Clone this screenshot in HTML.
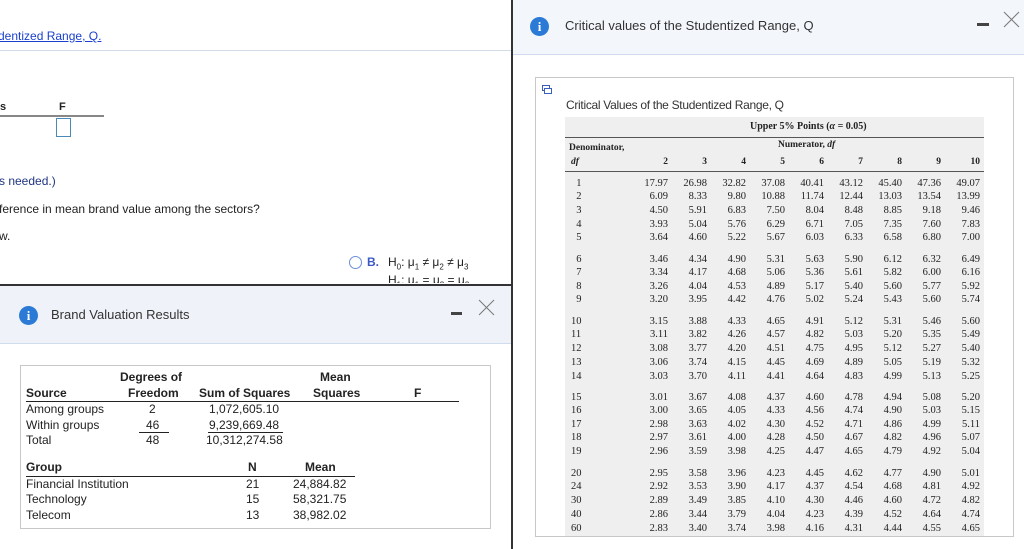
<!DOCTYPE html>
<html><head><meta charset="utf-8"><style>
*{margin:0;padding:0;box-sizing:border-box}
html,body{width:1024px;height:549px;overflow:hidden}
body{background:#fff;position:relative;font-family:"Liberation Sans",sans-serif;color:#222}
.a{position:absolute;white-space:nowrap}
.s{font-size:12px}
.r{position:absolute;left:0;width:430px;white-space:nowrap;font-family:"Liberation Serif",serif;font-size:10.5px;color:#222;height:13px;line-height:13px}
.r span{display:inline-block;width:39px;text-align:right}
.r span.d{width:64px;text-align:left;padding-left:6px}
.b{font-weight:bold}
</style></head><body>
<div class="a s" style="left:-2px;top:29px;color:#1a3fcf;text-decoration:underline">dentized Range, Q.</div>
<div class="a" style="left:0;top:50px;width:512px;height:1px;background:#d3dde9"></div>
<div class="a s b" style="left:0;top:101px;font-size:11px">s</div>
<div class="a s b" style="left:59px;top:101px;font-size:11px">F</div>
<div class="a" style="left:0;top:115px;width:104px;height:2px;background:#888"></div>
<div class="a" style="left:56px;top:118px;width:15px;height:19px;border:1px solid #4a8ab8"></div>
<div class="a s" style="left:-1px;top:174px;color:#1f3582">s needed.)</div>
<div class="a s" style="left:-1px;top:202px">ference in mean brand value among the sectors?</div>
<div class="a s" style="left:-1px;top:229px">w.</div>
<div class="a" style="left:349px;top:256px;width:13px;height:13px;border:1.5px solid #6a8fd8;border-radius:50%"></div>
<div class="a s b" style="left:367px;top:255px;color:#3b58c4">B.</div>
<div class="a s" style="left:388px;top:255px">H<sub style="font-size:8px">0</sub>: μ<sub style="font-size:8px">1</sub> ≠ μ<sub style="font-size:8px">2</sub> ≠ μ<sub style="font-size:8px">3</sub></div>
<div class="a s" style="left:388px;top:273px;height:10px;overflow:hidden">H<sub style="font-size:8px">1</sub>: μ<sub style="font-size:8px">1</sub> = μ<sub style="font-size:8px">2</sub> = μ<sub style="font-size:8px">3</sub></div>
<div class="a" style="left:0;top:284px;width:512px;height:2px;background:#333"></div>
<div class="a" style="left:0;top:286px;width:512px;height:58px;background:#eff3f9"></div>
<div class="a" style="left:0;top:343px;width:512px;height:1px;background:#cfdcee"></div>
<div class="a" style="left:19px;top:306px;width:19px;height:19px;border-radius:50%;background:#2b7bd6;color:#fff;font:bold 13px 'Liberation Serif',serif;text-align:center;line-height:19px">i</div>
<div class="a" style="left:51px;top:307px;font-size:13px;color:#333">Brand Valuation Results</div>
<div class="a" style="left:451px;top:312px;width:11px;height:3px;background:#444"></div>
<svg class="a" style="left:478px;top:299px" width="17" height="17"><path d="M1 1L16 16M16 1L1 16" stroke="#777" stroke-width="1"/></svg>
<div class="a" style="left:20px;top:365px;width:471px;height:164px;border:1px solid #c8c8c8"></div>
<div class="a s b" style="left:120px;top:370px">Degrees of</div>
<div class="a s b" style="left:320px;top:370px">Mean</div>
<div class="a s b" style="left:26px;top:386px">Source</div>
<div class="a s b" style="left:128px;top:386px">Freedom</div>
<div class="a s b" style="left:199px;top:386px">Sum of Squares</div>
<div class="a s b" style="left:313px;top:386px">Squares</div>
<div class="a s b" style="left:414px;top:386px">F</div>
<div class="a" style="left:26px;top:401px;width:433px;height:1px;background:#222"></div>
<div class="a s" style="left:26px;top:402px">Among groups</div>
<div class="a s" style="left:26px;top:418px">Within groups</div>
<div class="a s" style="left:26px;top:433px">Total</div>
<div class="a s" style="left:149px;top:402px">2</div>
<div class="a s" style="left:146px;top:418px">46</div>
<div class="a s" style="left:146px;top:433px">48</div>
<div class="a" style="left:139px;top:432px;width:30px;height:1px;background:#222"></div>
<div class="a s" style="left:209px;top:402px">1,072,605.10</div>
<div class="a s" style="left:209px;top:418px">9,239,669.48</div>
<div class="a s" style="left:206px;top:433px">10,312,274.58</div>
<div class="a" style="left:208px;top:432px;width:75px;height:1px;background:#222"></div>
<div class="a s b" style="left:26px;top:460px">Group</div>
<div class="a s b" style="left:248px;top:460px">N</div>
<div class="a s b" style="left:305px;top:460px">Mean</div>
<div class="a" style="left:26px;top:476px;width:329px;height:1px;background:#222"></div>
<div class="a s" style="left:26px;top:477px">Financial Institution</div>
<div class="a s" style="left:26px;top:492px">Technology</div>
<div class="a s" style="left:26px;top:508px">Telecom</div>
<div class="a s" style="left:246px;top:477px">21</div>
<div class="a s" style="left:246px;top:492px">15</div>
<div class="a s" style="left:246px;top:508px">13</div>
<div class="a s" style="left:293px;top:477px">24,884.82</div>
<div class="a s" style="left:293px;top:492px">58,321.75</div>
<div class="a s" style="left:293px;top:508px">38,982.02</div>
<div class="a" style="left:511px;top:0;width:2px;height:549px;background:#333"></div>
<div class="a" style="left:513px;top:0;width:511px;height:54px;background:#f3f6fb"></div>
<div class="a" style="left:513px;top:54px;width:511px;height:1px;background:#cfdcee"></div>
<div class="a" style="left:530px;top:17px;width:19px;height:19px;border-radius:50%;background:#2b7bd6;color:#fff;font:bold 13px 'Liberation Serif',serif;text-align:center;line-height:19px">i</div>
<div class="a" style="left:565px;top:18px;font-size:13px;color:#333">Critical values of the Studentized Range, Q</div>
<div class="a" style="left:977px;top:23px;width:12px;height:3px;background:#444"></div>
<svg class="a" style="left:1003px;top:11px" width="17" height="17"><path d="M1 1L16 16M16 1L1 16" stroke="#777" stroke-width="1"/></svg>
<div class="a" style="left:535px;top:77px;width:479px;height:460px;border:1px solid #c8c8c8"></div>
<svg class="a" style="left:542px;top:85px" width="10" height="9"><rect x="0.5" y="0.5" width="7" height="5" fill="none" stroke="#3a5ec0"/><rect x="2.5" y="3.5" width="7" height="5" fill="#fff" stroke="#3a5ec0"/></svg>
<div class="a" style="left:566px;top:98px;font-size:12px;color:#333;letter-spacing:-0.3px">Critical Values of the Studentized Range, Q</div>
<div class="a" style="left:565px;top:117px;width:419px;height:419px;background:#efefef"></div>
<div class="a b" style="left:750px;top:121px;font:bold 10px 'Liberation Serif',serif">Upper 5% Points (<i>α</i> = 0.05)</div>
<div class="a" style="left:565px;top:137px;width:419px;height:1px;background:#555"></div>
<div class="a" style="left:569px;top:143px;font:bold 9.5px 'Liberation Serif',serif">Denominator,</div>
<div class="a" style="left:778px;top:140px;font:bold 9.5px 'Liberation Serif',serif">Numerator, <i>df</i></div>
<div class="r b" style="top:156px;left:565px;font-size:9.5px"><span class="d"><i>df</i></span><span>2</span><span>3</span><span>4</span><span>5</span><span>6</span><span>7</span><span>8</span><span>9</span><span>10</span></div>
<div class="a" style="left:565px;top:171px;width:419px;height:1px;background:#555"></div>
<div style="position:absolute;left:565px;top:0;width:430px;height:549px">
<div class="r" style="top:177px"><span class="d">&nbsp;&nbsp;1</span><span>17.97</span><span>26.98</span><span>32.82</span><span>37.08</span><span>40.41</span><span>43.12</span><span>45.40</span><span>47.36</span><span>49.07</span></div>
<div class="r" style="top:190px"><span class="d">&nbsp;&nbsp;2</span><span>6.09</span><span>8.33</span><span>9.80</span><span>10.88</span><span>11.74</span><span>12.44</span><span>13.03</span><span>13.54</span><span>13.99</span></div>
<div class="r" style="top:204px"><span class="d">&nbsp;&nbsp;3</span><span>4.50</span><span>5.91</span><span>6.83</span><span>7.50</span><span>8.04</span><span>8.48</span><span>8.85</span><span>9.18</span><span>9.46</span></div>
<div class="r" style="top:218px"><span class="d">&nbsp;&nbsp;4</span><span>3.93</span><span>5.04</span><span>5.76</span><span>6.29</span><span>6.71</span><span>7.05</span><span>7.35</span><span>7.60</span><span>7.83</span></div>
<div class="r" style="top:231px"><span class="d">&nbsp;&nbsp;5</span><span>3.64</span><span>4.60</span><span>5.22</span><span>5.67</span><span>6.03</span><span>6.33</span><span>6.58</span><span>6.80</span><span>7.00</span></div>
<div class="r" style="top:253px"><span class="d">&nbsp;&nbsp;6</span><span>3.46</span><span>4.34</span><span>4.90</span><span>5.31</span><span>5.63</span><span>5.90</span><span>6.12</span><span>6.32</span><span>6.49</span></div>
<div class="r" style="top:266px"><span class="d">&nbsp;&nbsp;7</span><span>3.34</span><span>4.17</span><span>4.68</span><span>5.06</span><span>5.36</span><span>5.61</span><span>5.82</span><span>6.00</span><span>6.16</span></div>
<div class="r" style="top:280px"><span class="d">&nbsp;&nbsp;8</span><span>3.26</span><span>4.04</span><span>4.53</span><span>4.89</span><span>5.17</span><span>5.40</span><span>5.60</span><span>5.77</span><span>5.92</span></div>
<div class="r" style="top:293px"><span class="d">&nbsp;&nbsp;9</span><span>3.20</span><span>3.95</span><span>4.42</span><span>4.76</span><span>5.02</span><span>5.24</span><span>5.43</span><span>5.60</span><span>5.74</span></div>
<div class="r" style="top:315px"><span class="d">10</span><span>3.15</span><span>3.88</span><span>4.33</span><span>4.65</span><span>4.91</span><span>5.12</span><span>5.31</span><span>5.46</span><span>5.60</span></div>
<div class="r" style="top:328px"><span class="d">11</span><span>3.11</span><span>3.82</span><span>4.26</span><span>4.57</span><span>4.82</span><span>5.03</span><span>5.20</span><span>5.35</span><span>5.49</span></div>
<div class="r" style="top:342px"><span class="d">12</span><span>3.08</span><span>3.77</span><span>4.20</span><span>4.51</span><span>4.75</span><span>4.95</span><span>5.12</span><span>5.27</span><span>5.40</span></div>
<div class="r" style="top:356px"><span class="d">13</span><span>3.06</span><span>3.74</span><span>4.15</span><span>4.45</span><span>4.69</span><span>4.89</span><span>5.05</span><span>5.19</span><span>5.32</span></div>
<div class="r" style="top:370px"><span class="d">14</span><span>3.03</span><span>3.70</span><span>4.11</span><span>4.41</span><span>4.64</span><span>4.83</span><span>4.99</span><span>5.13</span><span>5.25</span></div>
<div class="r" style="top:391px"><span class="d">15</span><span>3.01</span><span>3.67</span><span>4.08</span><span>4.37</span><span>4.60</span><span>4.78</span><span>4.94</span><span>5.08</span><span>5.20</span></div>
<div class="r" style="top:404px"><span class="d">16</span><span>3.00</span><span>3.65</span><span>4.05</span><span>4.33</span><span>4.56</span><span>4.74</span><span>4.90</span><span>5.03</span><span>5.15</span></div>
<div class="r" style="top:418px"><span class="d">17</span><span>2.98</span><span>3.63</span><span>4.02</span><span>4.30</span><span>4.52</span><span>4.71</span><span>4.86</span><span>4.99</span><span>5.11</span></div>
<div class="r" style="top:431px"><span class="d">18</span><span>2.97</span><span>3.61</span><span>4.00</span><span>4.28</span><span>4.50</span><span>4.67</span><span>4.82</span><span>4.96</span><span>5.07</span></div>
<div class="r" style="top:445px"><span class="d">19</span><span>2.96</span><span>3.59</span><span>3.98</span><span>4.25</span><span>4.47</span><span>4.65</span><span>4.79</span><span>4.92</span><span>5.04</span></div>
<div class="r" style="top:467px"><span class="d">20</span><span>2.95</span><span>3.58</span><span>3.96</span><span>4.23</span><span>4.45</span><span>4.62</span><span>4.77</span><span>4.90</span><span>5.01</span></div>
<div class="r" style="top:480px"><span class="d">24</span><span>2.92</span><span>3.53</span><span>3.90</span><span>4.17</span><span>4.37</span><span>4.54</span><span>4.68</span><span>4.81</span><span>4.92</span></div>
<div class="r" style="top:494px"><span class="d">30</span><span>2.89</span><span>3.49</span><span>3.85</span><span>4.10</span><span>4.30</span><span>4.46</span><span>4.60</span><span>4.72</span><span>4.82</span></div>
<div class="r" style="top:508px"><span class="d">40</span><span>2.86</span><span>3.44</span><span>3.79</span><span>4.04</span><span>4.23</span><span>4.39</span><span>4.52</span><span>4.64</span><span>4.74</span></div>
<div class="r" style="top:522px"><span class="d">60</span><span>2.83</span><span>3.40</span><span>3.74</span><span>3.98</span><span>4.16</span><span>4.31</span><span>4.44</span><span>4.55</span><span>4.65</span></div>
</div>
</body></html>
